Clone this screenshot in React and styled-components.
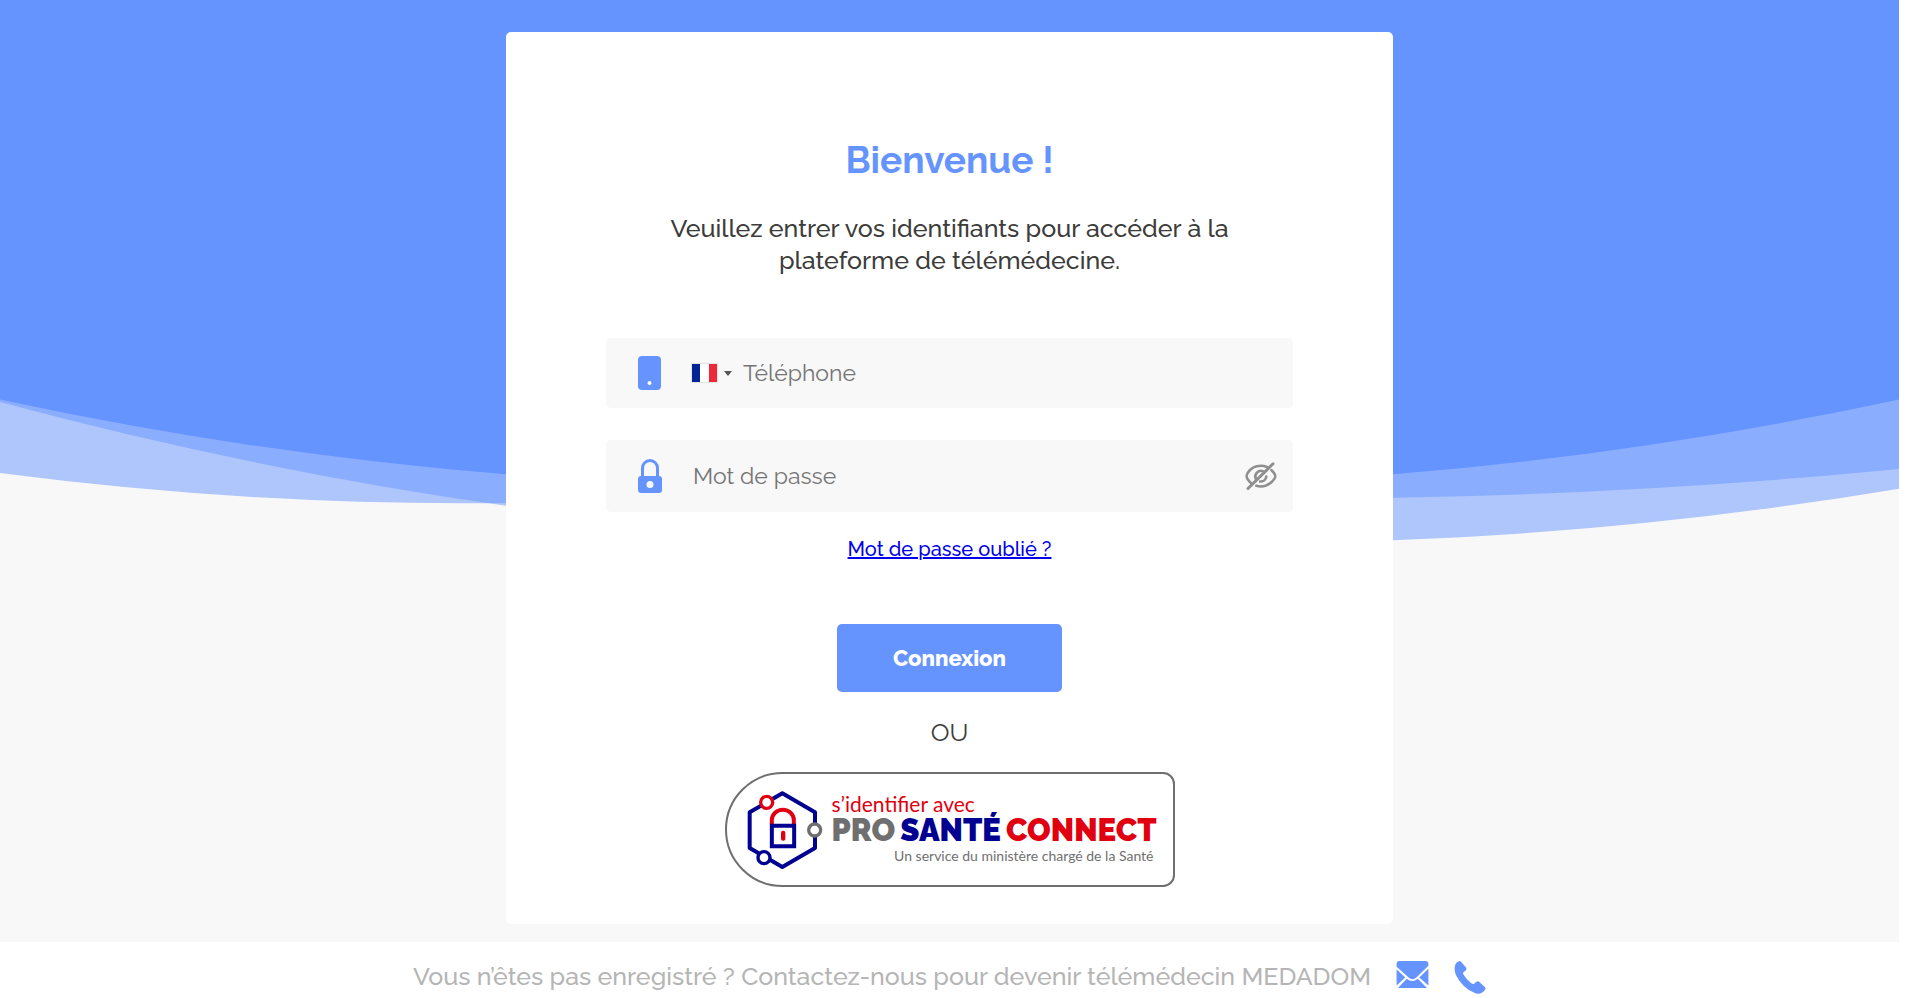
import React, { useState } from "react";
import styled, { createGlobalStyle } from "styled-components";

const GlobalStyle = createGlobalStyle`
  * {
    box-sizing: border-box;
  }

  body {
    margin: 0;
    background-color: #fff;
    color: #3c3c3b;
    font-family: Raleway, Lato, sans-serif;
  }

  button,
  input {
    font-family: inherit;
  }
`;

const Page = styled.div`
  display: flex;
  flex-direction: column;
  min-height: 100vh;
  padding-right: 21px;
`;

const Main = styled.main`
  position: relative;
  flex: 1;
  display: flex;
  justify-content: center;
  align-items: flex-start;
  padding: 32px 0 18px;
  background-color: #f8f8f8;
`;

const Waves = styled.svg`
  position: absolute;
  top: 0;
  left: 0;
  width: 100%;
  height: 560px;
  fill: #6594ff;
`;

const Card = styled.form`
  position: relative;
  display: flex;
  flex-direction: column;
  align-items: center;
  width: 100%;
  max-width: 887px;
  padding: 105px 100px 37px;
  border-radius: 5px;
  background-color: #fff;
`;

const Title = styled.h1`
  margin: 0 0 29px;
  color: #6594ff;
  font-size: 37px;
  font-weight: bold;
  line-height: 46px;
`;

const Intro = styled.p`
  max-width: 600px;
  margin: 0 0 62px;
  font-size: 25px;
  font-weight: 500;
  line-height: 32px;
  text-align: center;
`;

const Field = styled.div`
  display: flex;
  align-items: center;
  width: 100%;
  height: ${(props) => props.$height}px;
  margin-bottom: ${(props) => props.$gap}px;
  padding: 0 16px 0 32px;
  border-radius: 5px;
  background-color: #f8f8f8;

  & > label {
    display: flex;
    width: 54px;
  }
`;

const Input = styled.input`
  flex: 1;
  min-width: 0;
  height: 100%;
  border: 0;
  padding: 0 0 2px ${(props) => props.$indent}px;
  background: transparent;
  color: #3c3c3b;
  font-size: 23px;
  outline: none;

  &::placeholder {
    color: #757575;
    opacity: 1;
  }
`;

const CountryButton = styled.button`
  display: flex;
  align-items: center;
  gap: 7px;
  border: 0;
  padding: 0;
  background: transparent;
  cursor: pointer;
`;

const Flag = styled.span`
  width: 25px;
  height: 18px;
  background: linear-gradient(
    to right,
    #002395 0 8px,
    #fff 8px 17px,
    #ed2939 17px
  );
  box-shadow: 0 0 1px 1px #e4e4e4;
`;

const Caret = styled.span`
  border: 4px solid transparent;
  border-top: 5px solid #555;
  border-bottom: 0;
`;

const IconButton = styled.button`
  display: flex;
  border: 0;
  padding: 0;
  background: transparent;
  cursor: pointer;
`;

const ForgotLink = styled.a`
  margin-bottom: 63px;
  color: #0000ee;
  font-size: 20px;
  font-weight: 500;
  line-height: 24px;
`;

const SubmitButton = styled.button`
  width: 225px;
  height: 68px;
  border: 0;
  border-radius: 5px;
  background-color: #6594ff;
  color: #fff;
  font-size: 22px;
  font-weight: 800;
  cursor: pointer;
`;

const Or = styled.p`
  margin: 24px 0;
  font-size: 25px;
  line-height: 32px;
`;

const ProSanteButton = styled.button`
  display: flex;
  align-items: center;
  gap: 8px;
  width: 450px;
  height: 115px;
  border: 2px solid #706f6f;
  border-radius: 58px 12px 12px 58px;
  padding: 0 16px 0 20px;
  background-color: #fff;
  font-family: Lato, sans-serif;
  cursor: pointer;
`;

const ProSanteText = styled.span`
  flex: 1;
  display: flex;
  flex-direction: column;
  align-items: flex-start;
  white-space: nowrap;
`;

const Identify = styled.span`
  color: #e1000f;
  font-size: 21px;
  line-height: 20px;
`;

const Brand = styled.span`
  display: flex;
  justify-content: space-between;
  width: 100%;
  font-family: Raleway, Lato, sans-serif;
  font-size: 31px;
  font-weight: 900;
  line-height: 32px;
`;

const BrandPart = styled.span`
  color: ${(props) => props.$color};
`;

const Ministry = styled.span`
  align-self: flex-end;
  padding-right: 3px;
  color: #706f6f;
  font-size: 14px;
  line-height: 20px;
`;

const Footer = styled.footer`
  display: flex;
  justify-content: center;
  align-items: flex-start;
  gap: 25px;
  height: 56px;
  padding-top: 19px;
  background-color: #fff;
  color: #b5b5b5;
  font-size: 25px;
  font-weight: 500;

  & > a {
    display: flex;
  }
`;

const PhoneDeviceIcon = () => (
  <svg width="23" height="34" viewBox="0 0 23 34">
    <rect width="23" height="34" rx="4" fill="#6594ff" />
    <circle cx="11.5" cy="27" r="2" fill="#fff" />
  </svg>
);

const LockIcon = () => (
  <svg width="24" height="34" viewBox="0 0 24 34">
    <path
      d="M4.5 19V9a7.5 7.5 0 0 1 15 0v10"
      fill="none"
      stroke="#6594ff"
      strokeWidth="3"
    />
    <rect y="17" width="24" height="17" rx="3" fill="#6594ff" />
    <circle cx="12" cy="25.5" r="3.5" fill="#f8f8f8" />
  </svg>
);

const EyeOffIcon = () => (
  <svg
    width="32"
    height="28"
    viewBox="0 0 32 28"
    fill="none"
    stroke="#8f8f8f"
    strokeWidth="2.6"
    strokeLinecap="round"
  >
    <path d="M22 5C15.600 2.400 7.500 3.800 3 10.400c-1.900 2.800-2.100 4-.4 6.800 1 1.600 2 2.700 3.300 3.800" />
    <path d="M26.500 8.200c1.100 1 2 2 2.800 3.300 1.500 2.300 1.500 3.100 0 5.400-4.300 6.600-11.400 8.800-18 6.900" />
    <path d="M18 9.200a5.700 5.700 0 0 0-7 8M21.300 14.500a5.700 5.700 0 0 1-6.200 5" />
    <path d="M28 1.800 3 26.500" strokeWidth="3" />
  </svg>
);

const MailIcon = () => (
  <svg width="33" height="27" viewBox="0 0 33 28" fill="#6594ff">
    <path d="M3 0h27a3 3 0 0 1 3 3v2L20.500 17.200q-4 3.400-8 0L0 6V3a3 3 0 0 1 3-3z" />
    <path d="M0 8.500 9 17 0 25.500zM33 8v17.500L23.500 17z" />
    <path d="M10.500 18.400q6 4.600 11.500 0L31.500 28h-30z" />
  </svg>
);

const PhoneIcon = () => (
  <svg width="32" height="33" viewBox="0 0 32 34" fill="#6594ff">
    <path d="M2.500 1.400 4 .4q1.600-.9 3 .6l4.700 5.400q1.300 1.800-.2 3.300L9.300 11.500q-.8 1 0 2.500 2.800 5.200 8 8.800 1.700 1.200 2.900.6l2.300-2q1.700-1 3.200.3l5.300 4.800q1.600 1.600.5 3.200Q27.600 35 21.500 33.300 8.500 28.500 1.500 14.500-1.700 5.500 2.500 1.400z" />
  </svg>
);

const ProSanteIcon = () => (
  <svg width="77" height="80" viewBox="140 88 231 240" fill="none">
    <path
      d="M246 98 344 155v107l-98 57-98-57V155z"
      stroke="#000091"
      strokeWidth="12"
      strokeLinejoin="round"
    />
    <g fill="#fff" strokeWidth="10">
      <circle cx="199" cy="125" r="18" stroke="#e1000f" />
      <circle cx="191" cy="291" r="18" stroke="#000091" />
      <circle cx="343" cy="208" r="18" stroke="#706f6f" />
    </g>
    <path
      d="M214.500 191v-13a33 31 0 0 1 66 0v13"
      stroke="#e1000f"
      strokeWidth="12"
    />
    <path d="M214.500 195.500h67v61h-67z" stroke="#000091" strokeWidth="12" />
    <rect x="242" y="210" width="13" height="30" rx="6" fill="#e1000f" />
  </svg>
);

const App = () => {
  const [visible, setVisible] = useState(false);

  return (
    <>
      <GlobalStyle />
      <Page>
        <Main>
          <Waves viewBox="0 0 1899 560" preserveAspectRatio="none">
            <path
              opacity="0.5"
              d="M0 0H1899V488.700Q1646 531 1393 540.300C1098 551 801 547 506 505.700Q253 470 0 402z"
            />
            <path
              opacity="0.5"
              d="M0 0H1899V469Q1646 493.600 1393 497.700L506 503Q253 506 0 473z"
            />
            <path d="M0 0H1899V399.500Q1646 454 1393 474.300C1149 494 750 494 506 474.300Q253 454 0 399.500z" />
          </Waves>
          <Card onSubmit={(e) => e.preventDefault()}>
            <Title>Bienvenue !</Title>
            <Intro>
              Veuillez entrer vos identifiants pour accéder à la plateforme de
              télémédecine.
            </Intro>
            <Field $height={70} $gap={32}>
              <label htmlFor="phone" aria-label="Téléphone">
                <PhoneDeviceIcon />
              </label>
              <CountryButton type="button" aria-label="France">
                <Flag />
                <Caret />
              </CountryButton>
              <Input
                id="phone"
                type="tel"
                placeholder="Téléphone"
                $indent={11}
              />
            </Field>
            <Field $height={72} $gap={25}>
              <label htmlFor="password" aria-label="Mot de passe">
                <LockIcon />
              </label>
              <Input
                id="password"
                type={visible ? "text" : "password"}
                placeholder="Mot de passe"
                $indent={1}
              />
              <IconButton
                type="button"
                aria-label="Afficher le mot de passe"
                onClick={() => setVisible(!visible)}
              >
                <EyeOffIcon />
              </IconButton>
            </Field>
            <ForgotLink href="#">Mot de passe oublié ?</ForgotLink>
            <SubmitButton type="submit">Connexion</SubmitButton>
            <Or>OU</Or>
            <ProSanteButton type="button">
              <ProSanteIcon />
              <ProSanteText>
                <Identify>s’identifier avec</Identify>
                <Brand>
                  <BrandPart $color="#706f6f">PRO</BrandPart>
                  <BrandPart $color="#000091">SANTÉ</BrandPart>
                  <BrandPart $color="#e1000f">CONNECT</BrandPart>
                </Brand>
                <Ministry>Un service du ministère chargé de la Santé</Ministry>
              </ProSanteText>
            </ProSanteButton>
          </Card>
        </Main>
        <Footer>
          <span>
            Vous n’êtes pas enregistré ? Contactez-nous pour devenir télémédecin
            MEDADOM
          </span>
          <a href="#" aria-label="E-mail">
            <MailIcon />
          </a>
          <a href="#" aria-label="Appeler">
            <PhoneIcon />
          </a>
        </Footer>
      </Page>
    </>
  );
};

export default App;
